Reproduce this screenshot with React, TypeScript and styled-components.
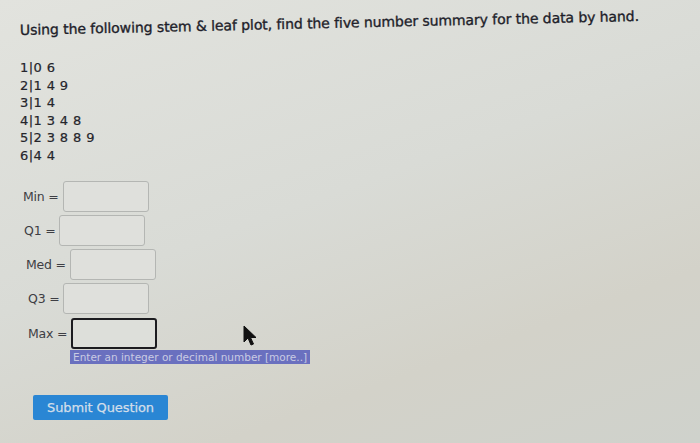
import React from "react";
import styled, { createGlobalStyle } from "styled-components";

const Global = createGlobalStyle`
  html, body { margin: 0; padding: 0; }
  body {
    width: 700px;
    height: 443px;
    overflow: hidden;
    background: linear-gradient(160deg, #e2e3de 0%, #d9dbd6 45%, #d3d2c9 75%, #cfd2cc 100%);
    font-family: "DejaVu Sans", Verdana, sans-serif;
  }
`;

const Page = styled.div`
  position: relative;
  width: 700px;
  height: 443px;
  padding: 0 0 0 20px;
  box-sizing: border-box;
  display: flex;
  flex-direction: column;
`;

const Heading = styled.h1`
  margin: 22px 0 0 0;
  font-size: 14px;
  font-weight: normal;
  letter-spacing: -0.08px;
  color: #1e1e2a;
  -webkit-text-stroke: 0.35px #1e1e2a;
  white-space: nowrap;
  transform: rotate(-1.3deg);
  transform-origin: 0 50%;
`;

const Plot = styled.div`
  margin-top: 21px;
  display: flex;
  flex-direction: column;
  font-size: 13px;
  line-height: 17.6px;
  color: #25252b;
  -webkit-text-stroke: 0.2px #25252b;
  letter-spacing: 0.4px;
`;

const PlotLine = styled.div`
  white-space: pre;
`;

const Form = styled.div`
  margin-top: 16px;
  display: flex;
  flex-direction: column;
  gap: 3.3px;
`;

const Row = styled.div<{ $indent: number }>`
  display: flex;
  align-items: center;
  gap: 4px;
  padding-left: ${(p) => p.$indent}px;
`;

const Label = styled.span`
  font-size: 12.5px;
  color: #3e3e44;
  letter-spacing: -0.2px;
`;

const Box = styled.div<{ $active?: boolean }>`
  width: 86px;
  height: 31px;
  box-sizing: border-box;
  border-radius: 3px;
  border: ${(p) => (p.$active ? "2px solid #1c1c20" : "1.5px solid #b4b6b3")};
  background: ${(p) => (p.$active ? "#dddfda" : "#dfe0dc")};
`;

const HintRow = styled.div`
  padding-left: 50px;
  margin-top: -6px;
  position: relative;
`;

const Hint = styled.span`
  display: inline-block;
  background: #6a70bf;
  color: #c9cbe3;
  font-size: 10.5px;
  line-height: 14px;
  padding: 0 3px;
  letter-spacing: 0px;
`;

const Submit = styled.button`
  align-self: flex-start;
  margin: 30px 0 0 13px;
  width: 135px;
  height: 25px;
  background: #2a86d4;
  border: none;
  border-radius: 2px;
  color: #d2deea;
  -webkit-text-stroke: 0.25px #d2deea;
  font-family: "DejaVu Sans", Verdana, sans-serif;
  font-size: 13px;
  letter-spacing: -0.1px;
  padding: 0;
`;

const Cursor = styled.svg`
  position: absolute;
  left: 241px;
  top: 325px;
`;

const rows = [
  { label: "Min =", indent: 3, active: false },
  { label: "Q1 =", indent: 4, active: false },
  { label: "Med =", indent: 6, active: false },
  { label: "Q3 =", indent: 8, active: false },
  { label: "Max =", indent: 8, active: true },
];

const plot = ["1|0 6", "2|1 4 9", "3|1 4", "4|1 3 4 8", "5|2 3 8 8 9", "6|4 4"];

export default function App() {
  return (
    <>
      <Global />
      <Page>
        <Heading>
          Using the following stem &amp; leaf plot, find the five number summary for the data by hand.
        </Heading>
        <Plot>
          {plot.map((l) => (
            <PlotLine key={l}>{l}</PlotLine>
          ))}
        </Plot>
        <Form>
          {rows.map((r) => (
            <Row key={r.label} $indent={r.indent}>
              <Label>{r.label}</Label>
              <Box $active={r.active} />
            </Row>
          ))}
          <HintRow>
            <Hint>Enter an integer or decimal number [more..]</Hint>
          </HintRow>
        </Form>
        <Submit>Submit Question</Submit>
        <Cursor width="20" height="22" viewBox="0 0 20 22">
          <path d="M3 1 L3 17 L7 13 L10 20 L12.5 19 L9.5 12.5 L15 12.5 Z" fill="#111" stroke="#111" strokeWidth="1" strokeLinejoin="round" />
        </Cursor>
      </Page>
    </>
  );
}
